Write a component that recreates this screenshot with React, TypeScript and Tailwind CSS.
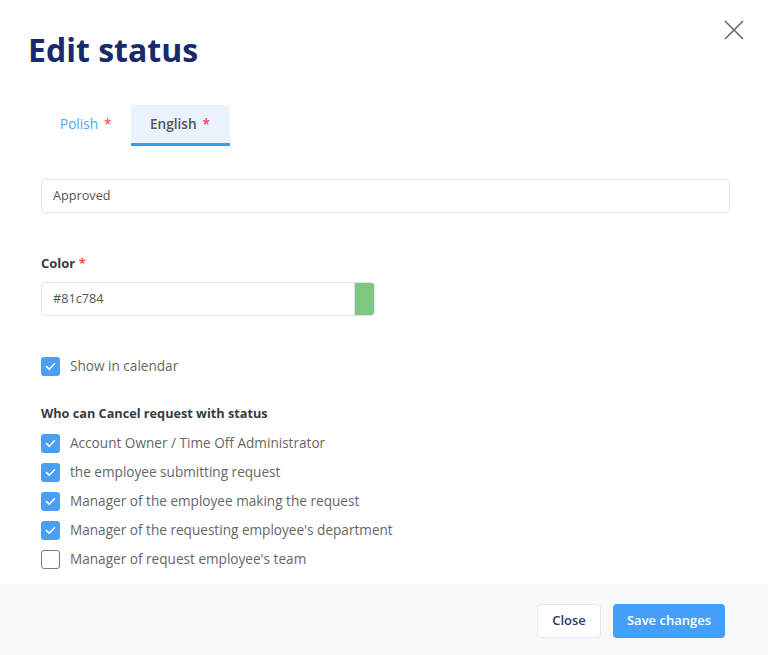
import React from 'react';

const FONT = { fontFamily: '"Open Sans", "Noto Sans", Arial, sans-serif' };

const cancelRoles = [
  { label: 'Account Owner / Time Off Administrator', checked: true },
  { label: 'the employee submitting request', checked: true },
  { label: 'Manager of the employee making the request', checked: true },
  { label: "Manager of the requesting employee's department", checked: true },
  { label: "Manager of request employee's team", checked: false },
];

function Checkbox({ checked }: { checked: boolean }) {
  if (!checked) {
    return <span className="block h-[19px] w-[19px] rounded-[3px] border-[1.5px] border-[#7a7a7a] bg-white" />;
  }
  return (
    <span className="flex h-[19px] w-[19px] items-center justify-center rounded-[3px] bg-[#4a9ff5]">
      <svg width="11" height="9" viewBox="0 0 11 9" fill="none">
        <path d="M1.5 4.6 L4.2 7.2 L9.5 1.8" stroke="white" strokeWidth="1.6" strokeLinecap="round" strokeLinejoin="round" />
      </svg>
    </span>
  );
}

function CheckRow({ label, checked, h = 'h-[29px]' }: { label: string; checked: boolean; h?: string }) {
  return (
    <label className={`flex items-center gap-[10px] ${h}`}>
      <Checkbox checked={checked} />
      <span className="text-[13.6px] text-[#666]">{label}</span>
    </label>
  );
}

export default function App() {
  return (
    <div className="flex h-[655px] w-[768px] flex-col bg-white" style={FONT}>
      <div className="flex-1">
        <div className="flex items-start justify-between">
          <h1 className="ml-[28px] mt-[30px] text-[32px] font-bold leading-[40px] text-[#19296b]">Edit status</h1>
          <button className="mr-[24px] mt-[20px] text-[#666]" aria-label="Close">
            <svg width="20" height="20" viewBox="0 0 20 20" fill="none">
              <path d="M1 1 L19 19 M19 1 L1 19" stroke="currentColor" strokeWidth="1.6" />
            </svg>
          </button>
        </div>

        <div className="ml-[41px] mr-[38px]">
          <div className="mt-[35px] flex">
            <div className="flex h-[41px] items-center border-b-[3px] border-transparent px-[19px] text-[13.6px] text-[#4aa3ff]">
              Polish <span className="ml-[6px] text-[#f0434f]">*</span>
            </div>
            <div className="flex h-[41px] w-[99px] items-center justify-center border-b-[3px] border-[#3d97f5] bg-[#eaf2fd] text-[13.6px] font-semibold text-[#555]">
              English <span className="ml-[6px] text-[#f0434f]">*</span>
            </div>
          </div>

          <div className="mt-[33px] flex h-[34px] items-center rounded-[4px] border border-[#dfe4f5] px-[11px] text-[12.7px] text-[#555]">
            Approved
          </div>

          <div className="mt-[41px] text-[13px] font-bold leading-[18px] text-[#363b46]">
            Color <span className="text-[#f0533a]">*</span>
          </div>
          <div className="mt-[10px] flex h-[34px] w-[334px] overflow-hidden rounded-[4px] border border-[#dfe4f5]">
            <div className="flex flex-1 items-center px-[11px] text-[12.7px] text-[#555]">#81c784</div>
            <div className="w-[20px] border-l border-[#dfe4f5] bg-[#81c784]" />
          </div>

          <div className="mt-[40px]">
            <CheckRow label="Show in calendar" checked h="h-[20px]" />
          </div>

          <div className="mt-[28px] text-[12.7px] font-bold leading-[18px] text-[#363b46]">
            Who can Cancel request with status
          </div>
          <div className="mt-[7px] flex flex-col">
            {cancelRoles.map((r) => (
              <CheckRow key={r.label} label={r.label} checked={r.checked} />
            ))}
          </div>
        </div>
      </div>

      <div className="flex h-[71px] items-start justify-end gap-[12px] bg-[#f8f9fa] pr-[43px] pt-[20px]">
        <button className="h-[34px] w-[64px] rounded-[4px] border border-[#e3e8f7] bg-white text-[13px] font-semibold text-[#2c3a6b]">
          Close
        </button>
        <button className="h-[34px] w-[112px] rounded-[4px] bg-[#459ef7] text-[13px] font-semibold text-white">
          Save changes
        </button>
      </div>
    </div>
  );
}
